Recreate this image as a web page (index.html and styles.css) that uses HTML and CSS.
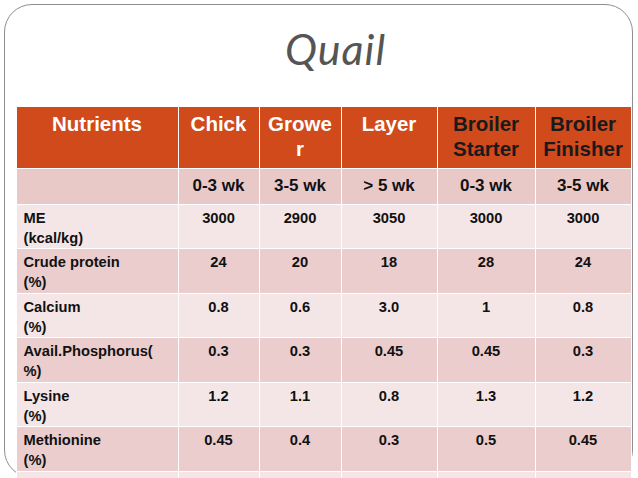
FILE: index.html
```html
<!DOCTYPE html>
<html>
<head>
<meta charset="utf-8">
<link rel="stylesheet" href="styles.css">
</head>
<body>
<div class="slide">
  <h1 class="title">Quail</h1>
  <table class="nutri">
    <colgroup>
      <col class="c1"><col class="c2"><col class="c3"><col class="c4"><col class="c5"><col class="c6">
    </colgroup>
    <tr class="head">
      <th>Nutrients</th>
      <th>Chick</th>
      <th>Growe<br>r</th>
      <th>Layer</th>
      <th class="dark">Broiler<br>Starter</th>
      <th class="dark">Broiler<br>Finisher</th>
    </tr>
    <tr class="sub">
      <td></td><td>0-3 wk</td><td>3-5 wk</td><td>&gt; 5 wk</td><td>0-3 wk</td><td>3-5 wk</td>
    </tr>
    <tr class="data light">
      <td class="lbl">ME<br>(kcal/kg)</td><td>3000</td><td>2900</td><td>3050</td><td>3000</td><td>3000</td>
    </tr>
    <tr class="data">
      <td class="lbl">Crude protein<br>(%)</td><td>24</td><td>20</td><td>18</td><td>28</td><td>24</td>
    </tr>
    <tr class="data light">
      <td class="lbl">Calcium<br>(%)</td><td>0.8</td><td>0.6</td><td>3.0</td><td>1</td><td>0.8</td>
    </tr>
    <tr class="data">
      <td class="lbl">Avail.Phosphorus(<br>%)</td><td>0.3</td><td>0.3</td><td>0.45</td><td>0.45</td><td>0.3</td>
    </tr>
    <tr class="data light">
      <td class="lbl">Lysine<br>(%)</td><td>1.2</td><td>1.1</td><td>0.8</td><td>1.3</td><td>1.2</td>
    </tr>
    <tr class="data">
      <td class="lbl">Methionine<br>(%)</td><td>0.45</td><td>0.4</td><td>0.3</td><td>0.5</td><td>0.45</td>
    </tr>
    <tr class="stub">
      <td></td><td></td><td></td><td></td><td></td><td></td>
    </tr>
  </table>
</div>
</body>
</html>
```
FILE: styles.css
```css
html, body {
  margin: 0;
  padding: 0;
  height: 478px;
  overflow: hidden;
  background: #ffffff;
}
.slide {
  margin: 4px 5px 0 4px;
  height: 474px;
  border: 1.5px solid #8e8e8e;
  border-radius: 28px;
  box-sizing: border-box;
}
.title {
  margin: 0;
  height: 100.5px;
  box-sizing: border-box;
  padding: 18px 0 0 34px;
  text-align: center;
  font-family: Lato, "Open Sans", sans-serif;
  font-style: italic;
  font-weight: 400;
  font-size: 43px;
  line-height: 52px;
  letter-spacing: 1px;
  color: #555555;
}
.nutri {
  margin-left: 10.5px;
  width: 615px;
  table-layout: fixed;
  border-collapse: collapse;
  font-family: "Liberation Sans", Arial, sans-serif;
  font-weight: bold;
}
.c1 { width: 162px; }
.c2 { width: 81px; }
.c3 { width: 82px; }
.c4 { width: 96px; }
.c5 { width: 98px; }
.c6 { width: 96px; }
.nutri th, .nutri td {
  border: 1.5px solid #ffffff;
  padding: 0;
  text-align: center;
}
.head th {
  background: #d04a1c;
  color: #ffffff;
  height: 62px;
  vertical-align: top;
  padding-top: 4px;
  font-size: 20.5px;
  line-height: 25px;
  box-sizing: border-box;
}
.head th.dark { color: #1a1a1a; }
.sub td {
  background: #e9c9c8;
  height: 35px;
  font-size: 17px;
  line-height: 20px;
  vertical-align: middle;
  color: #111;
}
.data td {
  background: #eacdcc;
  height: 44.5px;
  vertical-align: top;
  padding-top: 3px;
  font-size: 14.7px;
  line-height: 20px;
  color: #111;
  box-sizing: border-box;
}
.data.light td { background: #f4e6e6; }
.data td.lbl {
  text-align: left;
  padding-left: 7px;
}
.stub td {
  background: #f4e6e6;
  height: 6px;
  border-bottom: 0;
}
```
